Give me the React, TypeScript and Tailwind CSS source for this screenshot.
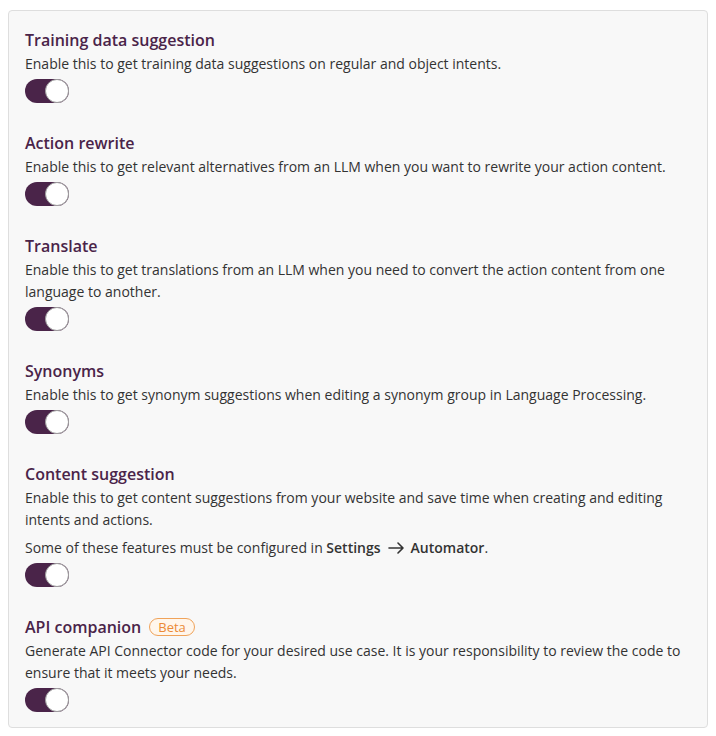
import type { ReactNode } from 'react'

function Toggle() {
  return (
    <div className="mt-1 flex h-[24px] w-[44px] justify-end rounded-full bg-[#4a2449]">
      <div className="h-[24px] w-[24px] rounded-full border border-[#9d9d9d] bg-white" />
    </div>
  )
}

function Section({
  title,
  badge,
  children,
}: {
  title: string
  badge?: string
  children: ReactNode
}) {
  return (
    <div className="flex flex-col">
      <div className="flex items-center">
        <h2 className="text-[16px] font-semibold leading-[24px] text-[#4a2449]">{title}</h2>
        {badge ? (
          <span className="ml-[8px] flex h-[18px] items-center rounded-full border border-[#f0a35a] bg-[#fff6ec] px-[8px] text-[13px] leading-none text-[#ec8a36]">
            {badge}
          </span>
        ) : null}
      </div>
      <div className="mt-[1px] flex flex-col gap-[6px] text-[14px] leading-[22px] text-[#333333]">
        {children}
      </div>
      <Toggle />
    </div>
  )
}

export default function App() {
  return (
    <div
      className="min-h-screen bg-white pl-[8px] pt-[10px]"
      style={{ fontFamily: '"Open Sans", "Noto Sans", sans-serif' }}
    >
      <div className="flex w-[700px] flex-col gap-[28px] rounded-[4px] border border-[#dedede] bg-[#f8f8f8] pb-[15px] pl-[16px] pr-[20px] pt-[17px]">
        <Section title="Training data suggestion">
          <p>Enable this to get training data suggestions on regular and object intents.</p>
        </Section>
        <Section title="Action rewrite">
          <p>Enable this to get relevant alternatives from an LLM when you want to rewrite your action content.</p>
        </Section>
        <Section title="Translate">
          <p>
            Enable this to get translations from an LLM when you need to convert the action content from one
            language to another.
          </p>
        </Section>
        <Section title="Synonyms">
          <p>Enable this to get synonym suggestions when editing a synonym group in Language Processing.</p>
        </Section>
        <Section title="Content suggestion">
          <p>
            Enable this to get content suggestions from your website and save time when creating and editing
            intents and actions.
          </p>
          <p className="flex items-center">
            Some of these features must be configured in&nbsp;
            <span className="font-semibold">Settings</span>
            <svg
              className="mx-[7px]"
              width="16"
              height="14"
              viewBox="0 0 16 14"
              fill="none"
              stroke="currentColor"
              strokeWidth="1.6"
              strokeLinecap="round"
              strokeLinejoin="round"
            >
              <path d="M1 7h14M10 2l5 5-5 5" />
            </svg>
            <span className="font-semibold">Automator</span>.
          </p>
        </Section>
        <Section title="API companion" badge="Beta">
          <p>
            Generate API Connector code for your desired use case. It is your responsibility to review the code to
            ensure that it meets your needs.
          </p>
        </Section>
      </div>
    </div>
  )
}
